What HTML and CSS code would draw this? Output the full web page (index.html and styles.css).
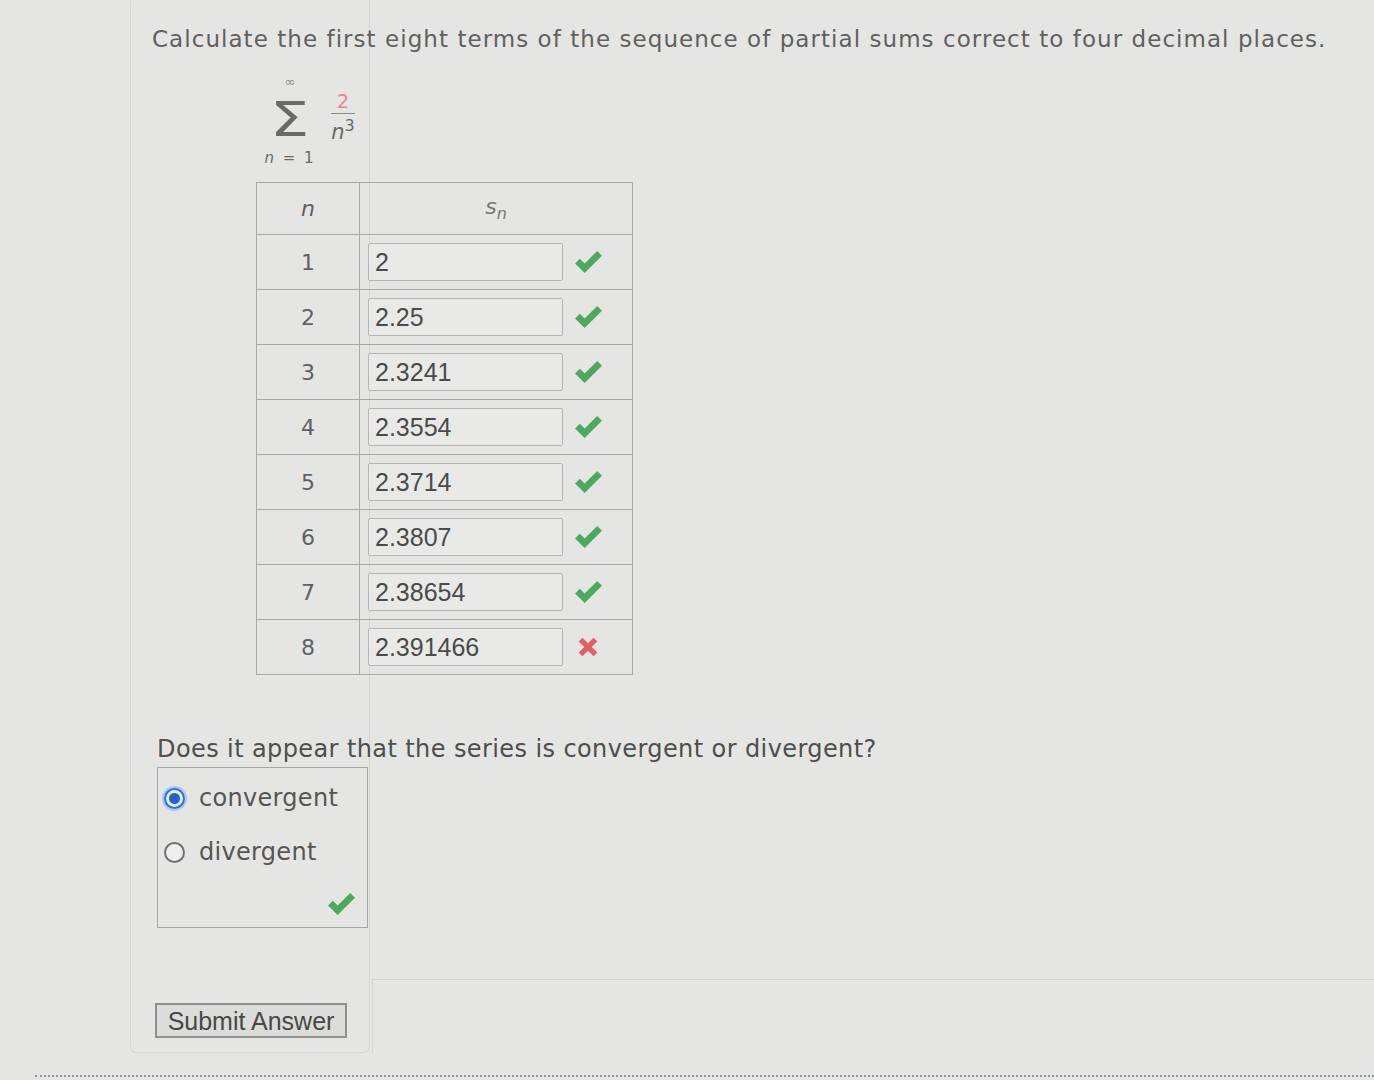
FILE: index.html
```html
<!DOCTYPE html>
<html>
<head>
<meta charset="utf-8">
<link rel="stylesheet" href="styles.css">
</head>
<body>
<div class="page">
  <div class="panel">
    <p class="prompt">Calculate the first eight terms of the sequence of partial sums correct to four decimal places.</p>
    <div class="series">
      <div class="sigma">
        <span class="inf">∞</span>
        <span class="sym">Σ</span>
        <span class="lim"><i>n</i> = 1</span>
      </div>
      <div class="frac">
        <span class="num">2</span>
        <span class="den"><i>n</i><sup>3</sup></span>
      </div>
    </div>
    <table class="sums">
      <tr><th class="ncol"><i>n</i></th><th class="scol"><i>s<sub>n</sub></i></th></tr>
      <tr><td class="ncol">1</td><td class="scol"><div class="cell"><span class="box">2</span><svg class="ok" viewBox="0 0 32 28"><path d="M2 15 L7 10 L12 15 L25 2 L30 7 L12 25 Z"/></svg></div></td></tr>
      <tr><td class="ncol">2</td><td class="scol"><div class="cell"><span class="box">2.25</span><svg class="ok" viewBox="0 0 32 28"><path d="M2 15 L7 10 L12 15 L25 2 L30 7 L12 25 Z"/></svg></div></td></tr>
      <tr><td class="ncol">3</td><td class="scol"><div class="cell"><span class="box">2.3241</span><svg class="ok" viewBox="0 0 32 28"><path d="M2 15 L7 10 L12 15 L25 2 L30 7 L12 25 Z"/></svg></div></td></tr>
      <tr><td class="ncol">4</td><td class="scol"><div class="cell"><span class="box">2.3554</span><svg class="ok" viewBox="0 0 32 28"><path d="M2 15 L7 10 L12 15 L25 2 L30 7 L12 25 Z"/></svg></div></td></tr>
      <tr><td class="ncol">5</td><td class="scol"><div class="cell"><span class="box">2.3714</span><svg class="ok" viewBox="0 0 32 28"><path d="M2 15 L7 10 L12 15 L25 2 L30 7 L12 25 Z"/></svg></div></td></tr>
      <tr><td class="ncol">6</td><td class="scol"><div class="cell"><span class="box">2.3807</span><svg class="ok" viewBox="0 0 32 28"><path d="M2 15 L7 10 L12 15 L25 2 L30 7 L12 25 Z"/></svg></div></td></tr>
      <tr><td class="ncol">7</td><td class="scol"><div class="cell"><span class="box">2.38654</span><svg class="ok" viewBox="0 0 32 28"><path d="M2 15 L7 10 L12 15 L25 2 L30 7 L12 25 Z"/></svg></div></td></tr>
      <tr><td class="ncol">8</td><td class="scol"><div class="cell"><span class="box">2.391466</span><svg class="bad" viewBox="0 0 28 28"><path d="M4 8 L8 4 L14 10 L20 4 L24 8 L18 14 L24 20 L20 24 L14 18 L8 24 L4 20 L10 14 Z"/></svg></div></td></tr>
    </table>
    <p class="question">Does it appear that the series is convergent or divergent?</p>
    <div class="choices">
      <label class="choice"><span class="radio on"></span>convergent</label>
      <label class="choice"><span class="radio"></span>divergent</label>
      <div class="choice-mark"><svg class="ok" viewBox="0 0 32 28"><path d="M2 15 L7 10 L12 15 L25 2 L30 7 L12 25 Z"/></svg></div>
    </div>
    <div class="submit-row">
      <button class="submit">Submit Answer</button>
    </div>
  </div>
  <div class="side-box"></div>
</div>
<div class="dotted"></div>
</body>
</html>
```
FILE: styles.css
```css
html, body {
  margin: 0;
  padding: 0;
  background: #e5e6e3;
}
body {
  width: 1374px;
  height: 1080px;
  overflow: hidden;
  font-family: "DejaVu Sans", Verdana, sans-serif;
  color: #5a5a5a;
}
.page {
  display: flex;
  align-items: flex-end;
  height: 1053px;
}
.panel {
  width: 240px;
  height: 1052px;
  margin-left: 130px;
  border-left: 1px solid #d6d7d3;
  border-bottom: 1px solid #d6d7d3;
  border-right: 1px solid #d6d7d3;
  border-radius: 0 0 6px 6px;
  box-sizing: border-box;
  position: relative;
}
.prompt {
  margin: 0;
  position: absolute;
  left: 21px;
  top: 25px;
  font-size: 23px;
  letter-spacing: 1.05px;
  color: #606060;
  white-space: nowrap;
}
.series {
  position: absolute;
  left: 128px;
  top: 74px;
  display: flex;
  align-items: flex-start;
}
.sigma {
  display: flex;
  flex-direction: column;
  align-items: center;
  width: 62px;
  color: #6a6a6a;
}
.inf { font-size: 13px; line-height: 13px; color: #8a8a8a; margin-bottom: 3px; }
.sym {
  font-size: 46px;
  line-height: 56px;
  font-family: "DejaVu Sans", sans-serif;
  transform: scale(1.35, 1.05);
}
.lim { font-size: 15px; line-height: 18px; letter-spacing: 2px; margin-top: 2px; }
.frac {
  display: flex;
  flex-direction: column;
  align-items: center;
  margin-left: 10px;
  margin-top: 14px;
}
.num {
  color: #e58890;
  font-size: 19px;
  line-height: 24px;
  padding: 0 6px;
  border-bottom: 1px solid #8a8a8a;
}
.den {
  font-size: 21px;
  line-height: 24px;
  color: #6a6a6a;
}
.den sup { font-size: 16px; vertical-align: 8px; }
.sums {
  position: absolute;
  left: 125px;
  top: 181px;
  width: 375px;
  table-layout: fixed;
  border-collapse: collapse;
}
.sums th, .sums td {
  border: 1.5px solid #a9aaa6;
  padding: 0;
  color: #606060;
}
.sums th {
  height: 51px;
  font-weight: normal;
  font-size: 22px;
}
.sums th.scol { color: #777; }
.sums th sub { font-size: 16px; }
.sums td {
  height: 54px;
}
.ncol {
  width: 102px;
  text-align: center;
  font-size: 22px;
}
.scol {
  width: 272px;
}
.cell {
  display: flex;
  align-items: center;
  padding-left: 8px;
  gap: 10px;
}
.box {
  display: block;
  width: 195px;
  height: 38px;
  box-sizing: border-box;
  border: 1px solid #b5b6b2;
  border-radius: 2px;
  background: #e9eae7;
  text-align: left;
  padding-left: 6px;
  font-family: "Liberation Sans", Arial, sans-serif;
  font-size: 25px;
  line-height: 36px;
  color: #4a4a4a;
}
.ok {
  width: 31px;
  height: 27px;
  fill: #4caa5e;
}
.bad {
  width: 26px;
  height: 26px;
  fill: #e06064;
  margin-left: 2px;
}
.question {
  position: absolute;
  left: 26px;
  top: 734px;
  margin: 0;
  font-size: 24px;
  letter-spacing: 0.4px;
  white-space: nowrap;
  color: #4e4e4e;
}
.choices {
  position: absolute;
  left: 26px;
  top: 766px;
  width: 211px;
  height: 161px;
  box-sizing: border-box;
  border: 1.5px solid #a5a6a2;
  display: flex;
  flex-direction: column;
  padding-top: 13px;
}
.choice {
  display: flex;
  align-items: center;
  gap: 14px;
  padding-left: 6px;
  height: 34px;
  font-size: 24px;
  letter-spacing: 0.3px;
  color: #555;
}
.choice:first-child { margin-bottom: 20px; }
.radio {
  width: 21px;
  height: 21px;
  border-radius: 50%;
  border: 2px solid #707070;
  box-sizing: border-box;
  background: #eee;
}
.radio.on {
  border: 2px solid #2b72d8;
  background: radial-gradient(circle, #2165cc 0 5px, #e8eef8 6px);
  box-shadow: 0 0 0 2px #a9c8f0;
}
.choice-mark {
  display: flex;
  justify-content: flex-end;
  padding-right: 10px;
  margin-top: 22px;
}
.submit-row {
  position: absolute;
  left: 24px;
  top: 1002px;
}
.submit {
  font-family: "Liberation Sans", Arial, sans-serif;
  font-size: 25px;
  color: #484848;
  background: #dcdcda;
  border: 2px solid #8f908d;
  padding: 0 8px;
  width: 192px;
  height: 35px;
  line-height: 30px;
}
.side-box {
  flex: 1;
  height: 73px;
  margin-left: 2px;
  border-top: 1px solid #d4d5d1;
  border-left: 1px solid #d4d5d1;
}
.dotted {
  margin-left: 35px;
  margin-top: 22px;
  height: 0;
  border-top: 2px dotted #8a96a6;
}
```
